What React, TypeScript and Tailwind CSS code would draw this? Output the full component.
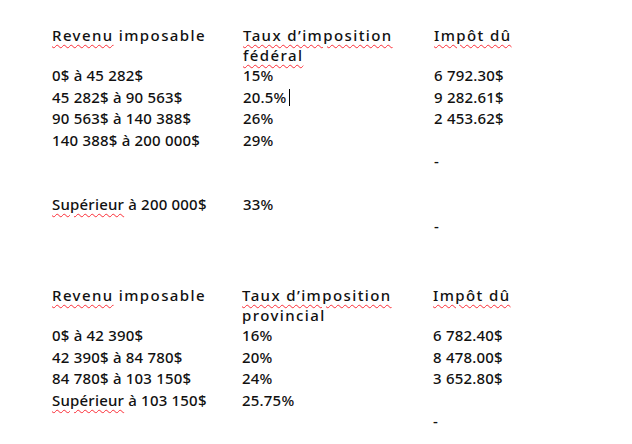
import type { ReactNode } from 'react';

type Row = [ReactNode, ReactNode, ReactNode];

const spell = 'underline decoration-wavy decoration-red-500 decoration-1 underline-offset-[3px]';

function Header({ rate, cols }: { rate: string; cols: string }) {
  return (
    <div className={`grid ${cols} text-[15px] font-medium leading-[20px] tracking-[1.4px] text-[#111]`}>
      <div>
        <span className={spell}>Revenu</span> imposable
      </div>
      <div>
        <span className={spell}>Taux d’imposition</span>
        <br />
        {rate === 'fédéral' ? <span className={spell}>fédéral</span> : rate}
      </div>
      <div>
        <span className={spell}>Impôt dû</span>
      </div>
    </div>
  );
}

function Body({ rows, cols }: { rows: Row[]; cols: string }) {
  return (
    <div className="text-[15px] font-medium leading-[21.5px] tracking-[0.2px] text-[#111]">
      {rows.map((r, i) => (
        <div key={i} className={`grid ${cols} h-[21.5px]`}>
          <div>{r[0]}</div>
          <div>{r[1]}</div>
          <div>{r[2]}</div>
        </div>
      ))}
    </div>
  );
}

const federal: Row[] = [
  ['0$ à 45 282$', '15%', '6 792.30$'],
  [
    '45 282$ à 90 563$',
    <span className="inline-flex items-center">
      20.5%
      <span className="ml-[2px] inline-block h-[17px] w-px bg-black" />
    </span>,
    '9 282.61$',
  ],
  ['90 563$ à 140 388$', '26%', '2 453.62$'],
  ['140 388$ à 200 000$', '29%', ''],
  ['', '', '-'],
  ['', '', ''],
  [
    <>
      <span className={spell}>Supérieur</span> à 200 000$
    </>,
    '33%',
    '',
  ],
  ['', '', '-'],
];

const provincial: Row[] = [
  ['0$ à 42 390$', '16%', '6 782.40$'],
  ['42 390$ à 84 780$', '20%', '8 478.00$'],
  ['84 780$ à 103 150$', '24%', '3 652.80$'],
  [
    <>
      <span className={spell}>Supérieur</span> à 103 150$
    </>,
    '25.75%',
    '',
  ],
  ['', '', '-'],
];

export default function App() {
  const c1 = 'grid-cols-[191px_191px_1fr]';
  const c2 = 'grid-cols-[190px_191px_1fr]';
  return (
    <div
      className="h-[444px] w-[632px] overflow-hidden bg-white pl-[52px] pt-[25px]"
      style={{ fontFamily: '"Noto Sans", "Open Sans", sans-serif' }}
    >
      <Header rate="fédéral" cols={c1} />
      <Body rows={federal} cols={c1} />
      <div className="h-[48px]" />
      <Header rate="provincial" cols={c2} />
      <Body rows={provincial} cols={c2} />
    </div>
  );
}
